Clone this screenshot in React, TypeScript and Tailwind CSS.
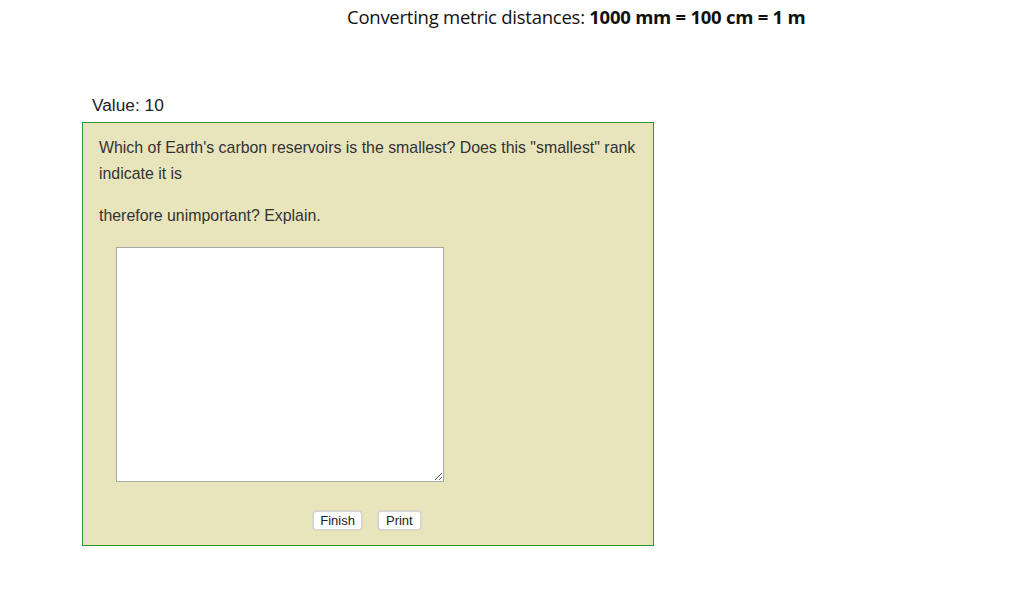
export default function App() {
  return (
    <div className="min-h-screen bg-white text-[#222]">
      <div className="pl-[347px] pt-[3px] h-[90px] font-['Open_Sans',sans-serif] text-[18.5px] text-[#111] tracking-[-0.25px]">
        Converting metric distances: <b>1000 mm = 100 cm = 1 m</b>
      </div>
      <div className="pl-[82px] font-['Liberation_Sans',Arial,sans-serif]">
        <div className="pl-[10px] text-[17.3px] leading-[20px] h-[32px] pt-[5px] text-[#222]">Value: 10</div>
        <div className="w-[572px] h-[424px] border border-[#2e962e] bg-[#e8e5bd] px-[16px] pt-[12px]">
          <p className="text-[15.9px] leading-[26px] text-[#333]">
            Which of Earth's carbon reservoirs is the smallest? Does this "smallest" rank indicate it is
          </p>
          <p className="text-[15.9px] leading-[26px] text-[#333] mt-[16px]">therefore unimportant? Explain.</p>
          <div className="pl-[17px] pt-[18px]">
            <textarea className="block w-[328px] h-[235px] bg-white border border-[#a9a9a9] resize-y outline-none" />
          </div>
          <div className="flex justify-center gap-[16px] pt-[29px] pr-[2px]">
            <button className="h-[19px] px-[6px] rounded-[3px] bg-white border border-[#d6d6d6] text-[13px] leading-[17px] text-[#222] shadow-[0_0_0_0.5px_#ccc]">
              Finish
            </button>
            <button className="h-[19px] px-[7px] rounded-[3px] bg-white border border-[#d6d6d6] text-[13px] leading-[17px] text-[#222] shadow-[0_0_0_0.5px_#ccc]">
              Print
            </button>
          </div>
        </div>
      </div>
    </div>
  );
}
